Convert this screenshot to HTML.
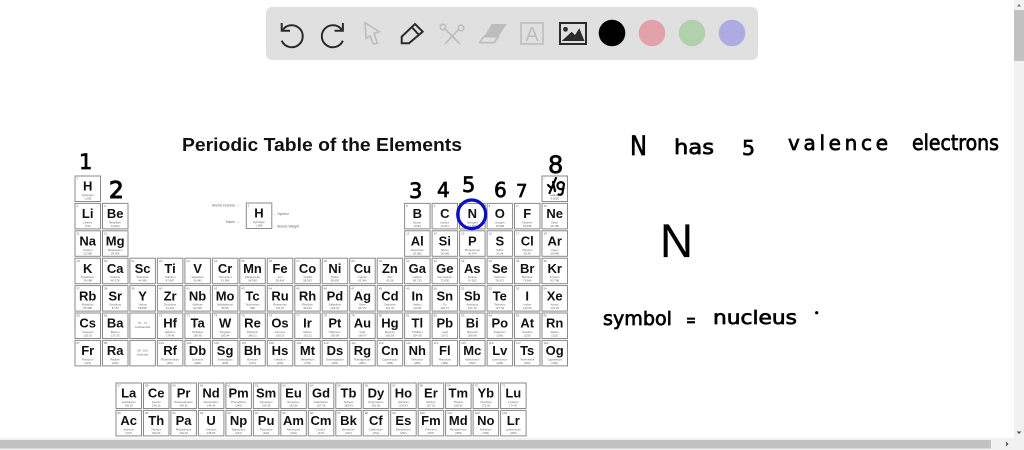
<!DOCTYPE html>
<html><head><meta charset="utf-8"><title>Periodic Table</title>
<style>
html,body{margin:0;padding:0;background:#fff;width:1024px;height:450px;overflow:hidden}
svg{display:block;font-family:"Liberation Sans",sans-serif}
.c rect{width:25.5px;height:25.5px;fill:#fff;stroke:#8a8a8a;stroke-width:1}
.s{font-size:13px;font-weight:700;text-anchor:middle;fill:#111}
.n{font-size:2.8px;text-anchor:middle;fill:#666}
.z{font-size:3px;fill:#666}
.l{font-size:3.4px;fill:#666}
.h{font-family:"DejaVu Sans",sans-serif;fill:#000;stroke:#000;stroke-width:.7}
</style></head><body>
<svg width="1024" height="450" viewBox="0 0 1024 450" xmlns="http://www.w3.org/2000/svg">
<!-- toolbar -->
<rect x="266" y="7" width="492" height="53" rx="6" fill="#e0e0e0"/>
<g fill="none" stroke="#2b2b2b" stroke-width="2">
<path d="M282.7 30A11 11 0 1 1 281.7 40.7"/><path d="M281.7 23V30.7H290"/>
<g transform="translate(624.6 0) scale(-1 1)"><path d="M282.7 30A11 11 0 1 1 281.7 40.7"/><path d="M281.7 23V30.7H290"/></g>
<path d="M401.7 43.3V36.7L415 24L422.7 31.7L409 43.3ZM411.7 27L419 35"/>
<rect x="560" y="23" width="26" height="21"/>
</g>
<g fill="none" stroke="#bdbdbd" stroke-width="1.6">
<path d="M365 22.7L379.3 31.7L374 33.3L377.3 43.3L373.3 44L370 36L366 38.3Z"/>
<path d="M444 28L460 44M459 29L445 44"/><circle cx="443" cy="27" r="2.8"/><circle cx="461" cy="28" r="2.8"/>
<path d="M480 41.7L484 36.7H498.3L494 42.7H480Z"/>
<rect x="521" y="23" width="22" height="21"/>
</g>
<path d="M491.7 24H506.7L498.3 36.7H484Z" fill="#bdbdbd"/>
<text x="532" y="41" font-size="20" text-anchor="middle" fill="#bdbdbd">A</text>
<circle cx="565.5" cy="29.3" r="2.4" fill="#2b2b2b"/>
<path d="M561.7 41L571.7 31.7L575 35L579.3 28.3L584.5 41Z" fill="#2b2b2b"/>
<circle cx="612" cy="33" r="13.3" fill="#000"/>
<circle cx="652" cy="33" r="13.3" fill="#e3a1aa"/>
<circle cx="692" cy="33" r="13.3" fill="#b1d1ad"/>
<circle cx="732" cy="33" r="13.3" fill="#aeaae2"/>
<!-- title -->
<text x="182" y="151" font-size="18" font-weight="700" fill="#111" textLength="280" lengthAdjust="spacingAndGlyphs">Periodic Table of the Elements</text>
<!-- legend -->
<g class="c" transform="translate(246.3 203)"><rect/><text class="z" x="1.5" y="3.7">1</text><text class="s" x="12.7" y="14.7">H</text><text class="n" x="12.7" y="20">Hydrogen</text><text class="n" x="12.7" y="23.5">1.008</text></g>
<text class="l" x="212" y="206.5">Atomic Number →</text>
<text class="l" x="226" y="223">Name →</text>
<text class="l" x="273" y="215">← Symbol</text>
<text class="l" x="273" y="227.5">← Atomic Weight</text>
<!-- row 1 -->
<g class="c" transform="translate(75 176)"><rect/><text class="z" x="1.5" y="3.7">1</text><text class="s" x="12.7" y="14.7">H</text><text class="n" x="12.7" y="20">Hydrogen</text><text class="n" x="12.7" y="23.5">1.008</text></g>
<g class="c" transform="translate(542 176)"><rect/><text class="z" x="1.5" y="3.7">2</text><text class="s" x="12.7" y="14.7">He</text><text class="n" x="12.7" y="20">Helium</text><text class="n" x="12.7" y="23.5">4.0026</text></g>
<!-- row 2 -->
<g class="c" transform="translate(75 203.4)"><rect/><text class="z" x="1.5" y="3.7">3</text><text class="s" x="12.7" y="14.7">Li</text><text class="n" x="12.7" y="20">Lithium</text><text class="n" x="12.7" y="23.5">6.94</text></g>
<g class="c" transform="translate(102.5 203.4)"><rect/><text class="z" x="1.5" y="3.7">4</text><text class="s" x="12.7" y="14.7">Be</text><text class="n" x="12.7" y="20">Beryllium</text><text class="n" x="12.7" y="23.5">9.0122</text></g>
<g class="c" transform="translate(404.6 203.4)"><rect/><text class="z" x="1.5" y="3.7">5</text><text class="s" x="12.7" y="14.7">B</text><text class="n" x="12.7" y="20">Boron</text><text class="n" x="12.7" y="23.5">10.81</text></g>
<g class="c" transform="translate(432.1 203.4)"><rect/><text class="z" x="1.5" y="3.7">6</text><text class="s" x="12.7" y="14.7">C</text><text class="n" x="12.7" y="20">Carbon</text><text class="n" x="12.7" y="23.5">12.011</text></g>
<g class="c" transform="translate(459.6 203.4)"><rect/><text class="z" x="1.5" y="3.7">7</text><text class="s" x="12.7" y="14.7">N</text><text class="n" x="12.7" y="20">Nitrogen</text><text class="n" x="12.7" y="23.5">14.007</text></g>
<g class="c" transform="translate(487.1 203.4)"><rect/><text class="z" x="1.5" y="3.7">8</text><text class="s" x="12.7" y="14.7">O</text><text class="n" x="12.7" y="20">Oxygen</text><text class="n" x="12.7" y="23.5">15.999</text></g>
<g class="c" transform="translate(514.5 203.4)"><rect/><text class="z" x="1.5" y="3.7">9</text><text class="s" x="12.7" y="14.7">F</text><text class="n" x="12.7" y="20">Fluorine</text><text class="n" x="12.7" y="23.5">18.998</text></g>
<g class="c" transform="translate(542 203.4)"><rect/><text class="z" x="1.5" y="3.7">10</text><text class="s" x="12.7" y="14.7">Ne</text><text class="n" x="12.7" y="20">Neon</text><text class="n" x="12.7" y="23.5">20.180</text></g>
<!-- row 3 -->
<g class="c" transform="translate(75 230.8)"><rect/><text class="z" x="1.5" y="3.7">11</text><text class="s" x="12.7" y="14.7">Na</text><text class="n" x="12.7" y="20">Sodium</text><text class="n" x="12.7" y="23.5">22.990</text></g>
<g class="c" transform="translate(102.5 230.8)"><rect/><text class="z" x="1.5" y="3.7">12</text><text class="s" x="12.7" y="14.7">Mg</text><text class="n" x="12.7" y="20">Magnesium</text><text class="n" x="12.7" y="23.5">24.305</text></g>
<g class="c" transform="translate(404.6 230.8)"><rect/><text class="z" x="1.5" y="3.7">13</text><text class="s" x="12.7" y="14.7">Al</text><text class="n" x="12.7" y="20">Aluminium</text><text class="n" x="12.7" y="23.5">26.982</text></g>
<g class="c" transform="translate(432.1 230.8)"><rect/><text class="z" x="1.5" y="3.7">14</text><text class="s" x="12.7" y="14.7">Si</text><text class="n" x="12.7" y="20">Silicon</text><text class="n" x="12.7" y="23.5">28.085</text></g>
<g class="c" transform="translate(459.6 230.8)"><rect/><text class="z" x="1.5" y="3.7">15</text><text class="s" x="12.7" y="14.7">P</text><text class="n" x="12.7" y="20">Phosphorus</text><text class="n" x="12.7" y="23.5">30.974</text></g>
<g class="c" transform="translate(487.1 230.8)"><rect/><text class="z" x="1.5" y="3.7">16</text><text class="s" x="12.7" y="14.7">S</text><text class="n" x="12.7" y="20">Sulfur</text><text class="n" x="12.7" y="23.5">32.06</text></g>
<g class="c" transform="translate(514.5 230.8)"><rect/><text class="z" x="1.5" y="3.7">17</text><text class="s" x="12.7" y="14.7">Cl</text><text class="n" x="12.7" y="20">Chlorine</text><text class="n" x="12.7" y="23.5">35.45</text></g>
<g class="c" transform="translate(542 230.8)"><rect/><text class="z" x="1.5" y="3.7">18</text><text class="s" x="12.7" y="14.7">Ar</text><text class="n" x="12.7" y="20">Argon</text><text class="n" x="12.7" y="23.5">39.948</text></g>
<!-- row 4 -->
<g class="c" transform="translate(75 258.2)"><rect/><text class="z" x="1.5" y="3.7">19</text><text class="s" x="12.7" y="14.7">K</text><text class="n" x="12.7" y="20">Potassium</text><text class="n" x="12.7" y="23.5">39.098</text></g>
<g class="c" transform="translate(102.5 258.2)"><rect/><text class="z" x="1.5" y="3.7">20</text><text class="s" x="12.7" y="14.7">Ca</text><text class="n" x="12.7" y="20">Calcium</text><text class="n" x="12.7" y="23.5">40.078</text></g>
<g class="c" transform="translate(129.9 258.2)"><rect/><text class="z" x="1.5" y="3.7">21</text><text class="s" x="12.7" y="14.7">Sc</text><text class="n" x="12.7" y="20">Scandium</text><text class="n" x="12.7" y="23.5">44.956</text></g>
<g class="c" transform="translate(157.4 258.2)"><rect/><text class="z" x="1.5" y="3.7">22</text><text class="s" x="12.7" y="14.7">Ti</text><text class="n" x="12.7" y="20">Titanium</text><text class="n" x="12.7" y="23.5">47.867</text></g>
<g class="c" transform="translate(184.9 258.2)"><rect/><text class="z" x="1.5" y="3.7">23</text><text class="s" x="12.7" y="14.7">V</text><text class="n" x="12.7" y="20">Vanadium</text><text class="n" x="12.7" y="23.5">50.942</text></g>
<g class="c" transform="translate(212.4 258.2)"><rect/><text class="z" x="1.5" y="3.7">24</text><text class="s" x="12.7" y="14.7">Cr</text><text class="n" x="12.7" y="20">Chromium</text><text class="n" x="12.7" y="23.5">51.996</text></g>
<g class="c" transform="translate(239.8 258.2)"><rect/><text class="z" x="1.5" y="3.7">25</text><text class="s" x="12.7" y="14.7">Mn</text><text class="n" x="12.7" y="20">Manganese</text><text class="n" x="12.7" y="23.5">54.938</text></g>
<g class="c" transform="translate(267.3 258.2)"><rect/><text class="z" x="1.5" y="3.7">26</text><text class="s" x="12.7" y="14.7">Fe</text><text class="n" x="12.7" y="20">Iron</text><text class="n" x="12.7" y="23.5">55.845</text></g>
<g class="c" transform="translate(294.8 258.2)"><rect/><text class="z" x="1.5" y="3.7">27</text><text class="s" x="12.7" y="14.7">Co</text><text class="n" x="12.7" y="20">Cobalt</text><text class="n" x="12.7" y="23.5">58.933</text></g>
<g class="c" transform="translate(322.2 258.2)"><rect/><text class="z" x="1.5" y="3.7">28</text><text class="s" x="12.7" y="14.7">Ni</text><text class="n" x="12.7" y="20">Nickel</text><text class="n" x="12.7" y="23.5">58.693</text></g>
<g class="c" transform="translate(349.7 258.2)"><rect/><text class="z" x="1.5" y="3.7">29</text><text class="s" x="12.7" y="14.7">Cu</text><text class="n" x="12.7" y="20">Copper</text><text class="n" x="12.7" y="23.5">63.546</text></g>
<g class="c" transform="translate(377.2 258.2)"><rect/><text class="z" x="1.5" y="3.7">30</text><text class="s" x="12.7" y="14.7">Zn</text><text class="n" x="12.7" y="20">Zinc</text><text class="n" x="12.7" y="23.5">65.38</text></g>
<g class="c" transform="translate(404.6 258.2)"><rect/><text class="z" x="1.5" y="3.7">31</text><text class="s" x="12.7" y="14.7">Ga</text><text class="n" x="12.7" y="20">Gallium</text><text class="n" x="12.7" y="23.5">69.723</text></g>
<g class="c" transform="translate(432.1 258.2)"><rect/><text class="z" x="1.5" y="3.7">32</text><text class="s" x="12.7" y="14.7">Ge</text><text class="n" x="12.7" y="20">Germanium</text><text class="n" x="12.7" y="23.5">72.630</text></g>
<g class="c" transform="translate(459.6 258.2)"><rect/><text class="z" x="1.5" y="3.7">33</text><text class="s" x="12.7" y="14.7">As</text><text class="n" x="12.7" y="20">Arsenic</text><text class="n" x="12.7" y="23.5">74.922</text></g>
<g class="c" transform="translate(487.1 258.2)"><rect/><text class="z" x="1.5" y="3.7">34</text><text class="s" x="12.7" y="14.7">Se</text><text class="n" x="12.7" y="20">Selenium</text><text class="n" x="12.7" y="23.5">78.971</text></g>
<g class="c" transform="translate(514.5 258.2)"><rect/><text class="z" x="1.5" y="3.7">35</text><text class="s" x="12.7" y="14.7">Br</text><text class="n" x="12.7" y="20">Bromine</text><text class="n" x="12.7" y="23.5">79.904</text></g>
<g class="c" transform="translate(542 258.2)"><rect/><text class="z" x="1.5" y="3.7">36</text><text class="s" x="12.7" y="14.7">Kr</text><text class="n" x="12.7" y="20">Krypton</text><text class="n" x="12.7" y="23.5">83.798</text></g>
<!-- row 5 -->
<g class="c" transform="translate(75 285.6)"><rect/><text class="z" x="1.5" y="3.7">37</text><text class="s" x="12.7" y="14.7">Rb</text><text class="n" x="12.7" y="20">Rubidium</text><text class="n" x="12.7" y="23.5">85.468</text></g>
<g class="c" transform="translate(102.5 285.6)"><rect/><text class="z" x="1.5" y="3.7">38</text><text class="s" x="12.7" y="14.7">Sr</text><text class="n" x="12.7" y="20">Strontium</text><text class="n" x="12.7" y="23.5">87.62</text></g>
<g class="c" transform="translate(129.9 285.6)"><rect/><text class="z" x="1.5" y="3.7">39</text><text class="s" x="12.7" y="14.7">Y</text><text class="n" x="12.7" y="20">Yttrium</text><text class="n" x="12.7" y="23.5">88.906</text></g>
<g class="c" transform="translate(157.4 285.6)"><rect/><text class="z" x="1.5" y="3.7">40</text><text class="s" x="12.7" y="14.7">Zr</text><text class="n" x="12.7" y="20">Zirconium</text><text class="n" x="12.7" y="23.5">91.224</text></g>
<g class="c" transform="translate(184.9 285.6)"><rect/><text class="z" x="1.5" y="3.7">41</text><text class="s" x="12.7" y="14.7">Nb</text><text class="n" x="12.7" y="20">Niobium</text><text class="n" x="12.7" y="23.5">92.906</text></g>
<g class="c" transform="translate(212.4 285.6)"><rect/><text class="z" x="1.5" y="3.7">42</text><text class="s" x="12.7" y="14.7">Mo</text><text class="n" x="12.7" y="20">Molybdenum</text><text class="n" x="12.7" y="23.5">95.95</text></g>
<g class="c" transform="translate(239.8 285.6)"><rect/><text class="z" x="1.5" y="3.7">43</text><text class="s" x="12.7" y="14.7">Tc</text><text class="n" x="12.7" y="20">Technetium</text><text class="n" x="12.7" y="23.5">(98)</text></g>
<g class="c" transform="translate(267.3 285.6)"><rect/><text class="z" x="1.5" y="3.7">44</text><text class="s" x="12.7" y="14.7">Ru</text><text class="n" x="12.7" y="20">Ruthenium</text><text class="n" x="12.7" y="23.5">101.07</text></g>
<g class="c" transform="translate(294.8 285.6)"><rect/><text class="z" x="1.5" y="3.7">45</text><text class="s" x="12.7" y="14.7">Rh</text><text class="n" x="12.7" y="20">Rhodium</text><text class="n" x="12.7" y="23.5">102.91</text></g>
<g class="c" transform="translate(322.2 285.6)"><rect/><text class="z" x="1.5" y="3.7">46</text><text class="s" x="12.7" y="14.7">Pd</text><text class="n" x="12.7" y="20">Palladium</text><text class="n" x="12.7" y="23.5">106.42</text></g>
<g class="c" transform="translate(349.7 285.6)"><rect/><text class="z" x="1.5" y="3.7">47</text><text class="s" x="12.7" y="14.7">Ag</text><text class="n" x="12.7" y="20">Silver</text><text class="n" x="12.7" y="23.5">107.87</text></g>
<g class="c" transform="translate(377.2 285.6)"><rect/><text class="z" x="1.5" y="3.7">48</text><text class="s" x="12.7" y="14.7">Cd</text><text class="n" x="12.7" y="20">Cadmium</text><text class="n" x="12.7" y="23.5">112.41</text></g>
<g class="c" transform="translate(404.6 285.6)"><rect/><text class="z" x="1.5" y="3.7">49</text><text class="s" x="12.7" y="14.7">In</text><text class="n" x="12.7" y="20">Indium</text><text class="n" x="12.7" y="23.5">114.82</text></g>
<g class="c" transform="translate(432.1 285.6)"><rect/><text class="z" x="1.5" y="3.7">50</text><text class="s" x="12.7" y="14.7">Sn</text><text class="n" x="12.7" y="20">Tin</text><text class="n" x="12.7" y="23.5">118.71</text></g>
<g class="c" transform="translate(459.6 285.6)"><rect/><text class="z" x="1.5" y="3.7">51</text><text class="s" x="12.7" y="14.7">Sb</text><text class="n" x="12.7" y="20">Antimony</text><text class="n" x="12.7" y="23.5">121.76</text></g>
<g class="c" transform="translate(487.1 285.6)"><rect/><text class="z" x="1.5" y="3.7">52</text><text class="s" x="12.7" y="14.7">Te</text><text class="n" x="12.7" y="20">Tellurium</text><text class="n" x="12.7" y="23.5">127.60</text></g>
<g class="c" transform="translate(514.5 285.6)"><rect/><text class="z" x="1.5" y="3.7">53</text><text class="s" x="12.7" y="14.7">I</text><text class="n" x="12.7" y="20">Iodine</text><text class="n" x="12.7" y="23.5">126.90</text></g>
<g class="c" transform="translate(542 285.6)"><rect/><text class="z" x="1.5" y="3.7">54</text><text class="s" x="12.7" y="14.7">Xe</text><text class="n" x="12.7" y="20">Xenon</text><text class="n" x="12.7" y="23.5">131.29</text></g>
<!-- row 6 -->
<g class="c" transform="translate(75 313)"><rect/><text class="z" x="1.5" y="3.7">55</text><text class="s" x="12.7" y="14.7">Cs</text><text class="n" x="12.7" y="20">Caesium</text><text class="n" x="12.7" y="23.5">132.91</text></g>
<g class="c" transform="translate(102.5 313)"><rect/><text class="z" x="1.5" y="3.7">56</text><text class="s" x="12.7" y="14.7">Ba</text><text class="n" x="12.7" y="20">Barium</text><text class="n" x="12.7" y="23.5">137.33</text></g>
<g class="c" transform="translate(129.9 313)"><rect/><text class="n" x="12.7" y="11">57 - 71</text><text class="n" x="12.7" y="15">Lanthanoids</text></g>
<g class="c" transform="translate(157.4 313)"><rect/><text class="z" x="1.5" y="3.7">72</text><text class="s" x="12.7" y="14.7">Hf</text><text class="n" x="12.7" y="20">Hafnium</text><text class="n" x="12.7" y="23.5">178.49</text></g>
<g class="c" transform="translate(184.9 313)"><rect/><text class="z" x="1.5" y="3.7">73</text><text class="s" x="12.7" y="14.7">Ta</text><text class="n" x="12.7" y="20">Tantalum</text><text class="n" x="12.7" y="23.5">180.95</text></g>
<g class="c" transform="translate(212.4 313)"><rect/><text class="z" x="1.5" y="3.7">74</text><text class="s" x="12.7" y="14.7">W</text><text class="n" x="12.7" y="20">Tungsten</text><text class="n" x="12.7" y="23.5">183.84</text></g>
<g class="c" transform="translate(239.8 313)"><rect/><text class="z" x="1.5" y="3.7">75</text><text class="s" x="12.7" y="14.7">Re</text><text class="n" x="12.7" y="20">Rhenium</text><text class="n" x="12.7" y="23.5">186.21</text></g>
<g class="c" transform="translate(267.3 313)"><rect/><text class="z" x="1.5" y="3.7">76</text><text class="s" x="12.7" y="14.7">Os</text><text class="n" x="12.7" y="20">Osmium</text><text class="n" x="12.7" y="23.5">190.23</text></g>
<g class="c" transform="translate(294.8 313)"><rect/><text class="z" x="1.5" y="3.7">77</text><text class="s" x="12.7" y="14.7">Ir</text><text class="n" x="12.7" y="20">Iridium</text><text class="n" x="12.7" y="23.5">192.22</text></g>
<g class="c" transform="translate(322.2 313)"><rect/><text class="z" x="1.5" y="3.7">78</text><text class="s" x="12.7" y="14.7">Pt</text><text class="n" x="12.7" y="20">Platinum</text><text class="n" x="12.7" y="23.5">195.08</text></g>
<g class="c" transform="translate(349.7 313)"><rect/><text class="z" x="1.5" y="3.7">79</text><text class="s" x="12.7" y="14.7">Au</text><text class="n" x="12.7" y="20">Gold</text><text class="n" x="12.7" y="23.5">196.97</text></g>
<g class="c" transform="translate(377.2 313)"><rect/><text class="z" x="1.5" y="3.7">80</text><text class="s" x="12.7" y="14.7">Hg</text><text class="n" x="12.7" y="20">Mercury</text><text class="n" x="12.7" y="23.5">200.59</text></g>
<g class="c" transform="translate(404.6 313)"><rect/><text class="z" x="1.5" y="3.7">81</text><text class="s" x="12.7" y="14.7">Tl</text><text class="n" x="12.7" y="20">Thallium</text><text class="n" x="12.7" y="23.5">204.38</text></g>
<g class="c" transform="translate(432.1 313)"><rect/><text class="z" x="1.5" y="3.7">82</text><text class="s" x="12.7" y="14.7">Pb</text><text class="n" x="12.7" y="20">Lead</text><text class="n" x="12.7" y="23.5">207.2</text></g>
<g class="c" transform="translate(459.6 313)"><rect/><text class="z" x="1.5" y="3.7">83</text><text class="s" x="12.7" y="14.7">Bi</text><text class="n" x="12.7" y="20">Bismuth</text><text class="n" x="12.7" y="23.5">208.98</text></g>
<g class="c" transform="translate(487.1 313)"><rect/><text class="z" x="1.5" y="3.7">84</text><text class="s" x="12.7" y="14.7">Po</text><text class="n" x="12.7" y="20">Polonium</text><text class="n" x="12.7" y="23.5">(209)</text></g>
<g class="c" transform="translate(514.5 313)"><rect/><text class="z" x="1.5" y="3.7">85</text><text class="s" x="12.7" y="14.7">At</text><text class="n" x="12.7" y="20">Astatine</text><text class="n" x="12.7" y="23.5">(210)</text></g>
<g class="c" transform="translate(542 313)"><rect/><text class="z" x="1.5" y="3.7">86</text><text class="s" x="12.7" y="14.7">Rn</text><text class="n" x="12.7" y="20">Radon</text><text class="n" x="12.7" y="23.5">(222)</text></g>
<!-- row 7 -->
<g class="c" transform="translate(75 340.4)"><rect/><text class="z" x="1.5" y="3.7">87</text><text class="s" x="12.7" y="14.7">Fr</text><text class="n" x="12.7" y="20">Francium</text><text class="n" x="12.7" y="23.5">(223)</text></g>
<g class="c" transform="translate(102.5 340.4)"><rect/><text class="z" x="1.5" y="3.7">88</text><text class="s" x="12.7" y="14.7">Ra</text><text class="n" x="12.7" y="20">Radium</text><text class="n" x="12.7" y="23.5">(226)</text></g>
<g class="c" transform="translate(129.9 340.4)"><rect/><text class="n" x="12.7" y="11">89 - 103</text><text class="n" x="12.7" y="15">Actinoids</text></g>
<g class="c" transform="translate(157.4 340.4)"><rect/><text class="z" x="1.5" y="3.7">104</text><text class="s" x="12.7" y="14.7">Rf</text><text class="n" x="12.7" y="20">Rutherfordium</text><text class="n" x="12.7" y="23.5">(267)</text></g>
<g class="c" transform="translate(184.9 340.4)"><rect/><text class="z" x="1.5" y="3.7">105</text><text class="s" x="12.7" y="14.7">Db</text><text class="n" x="12.7" y="20">Dubnium</text><text class="n" x="12.7" y="23.5">(268)</text></g>
<g class="c" transform="translate(212.4 340.4)"><rect/><text class="z" x="1.5" y="3.7">106</text><text class="s" x="12.7" y="14.7">Sg</text><text class="n" x="12.7" y="20">Seaborgium</text><text class="n" x="12.7" y="23.5">(269)</text></g>
<g class="c" transform="translate(239.8 340.4)"><rect/><text class="z" x="1.5" y="3.7">107</text><text class="s" x="12.7" y="14.7">Bh</text><text class="n" x="12.7" y="20">Bohrium</text><text class="n" x="12.7" y="23.5">(270)</text></g>
<g class="c" transform="translate(267.3 340.4)"><rect/><text class="z" x="1.5" y="3.7">108</text><text class="s" x="12.7" y="14.7">Hs</text><text class="n" x="12.7" y="20">Hassium</text><text class="n" x="12.7" y="23.5">(269)</text></g>
<g class="c" transform="translate(294.8 340.4)"><rect/><text class="z" x="1.5" y="3.7">109</text><text class="s" x="12.7" y="14.7">Mt</text><text class="n" x="12.7" y="20">Meitnerium</text><text class="n" x="12.7" y="23.5">(278)</text></g>
<g class="c" transform="translate(322.2 340.4)"><rect/><text class="z" x="1.5" y="3.7">110</text><text class="s" x="12.7" y="14.7">Ds</text><text class="n" x="12.7" y="20">Darmstadtium</text><text class="n" x="12.7" y="23.5">(281)</text></g>
<g class="c" transform="translate(349.7 340.4)"><rect/><text class="z" x="1.5" y="3.7">111</text><text class="s" x="12.7" y="14.7">Rg</text><text class="n" x="12.7" y="20">Roentgenium</text><text class="n" x="12.7" y="23.5">(282)</text></g>
<g class="c" transform="translate(377.2 340.4)"><rect/><text class="z" x="1.5" y="3.7">112</text><text class="s" x="12.7" y="14.7">Cn</text><text class="n" x="12.7" y="20">Copernicium</text><text class="n" x="12.7" y="23.5">(285)</text></g>
<g class="c" transform="translate(404.6 340.4)"><rect/><text class="z" x="1.5" y="3.7">113</text><text class="s" x="12.7" y="14.7">Nh</text><text class="n" x="12.7" y="20">Nihonium</text><text class="n" x="12.7" y="23.5">(286)</text></g>
<g class="c" transform="translate(432.1 340.4)"><rect/><text class="z" x="1.5" y="3.7">114</text><text class="s" x="12.7" y="14.7">Fl</text><text class="n" x="12.7" y="20">Flerovium</text><text class="n" x="12.7" y="23.5">(289)</text></g>
<g class="c" transform="translate(459.6 340.4)"><rect/><text class="z" x="1.5" y="3.7">115</text><text class="s" x="12.7" y="14.7">Mc</text><text class="n" x="12.7" y="20">Moscovium</text><text class="n" x="12.7" y="23.5">(290)</text></g>
<g class="c" transform="translate(487.1 340.4)"><rect/><text class="z" x="1.5" y="3.7">116</text><text class="s" x="12.7" y="14.7">Lv</text><text class="n" x="12.7" y="20">Livermorium</text><text class="n" x="12.7" y="23.5">(293)</text></g>
<g class="c" transform="translate(514.5 340.4)"><rect/><text class="z" x="1.5" y="3.7">117</text><text class="s" x="12.7" y="14.7">Ts</text><text class="n" x="12.7" y="20">Tennessine</text><text class="n" x="12.7" y="23.5">(294)</text></g>
<g class="c" transform="translate(542 340.4)"><rect/><text class="z" x="1.5" y="3.7">118</text><text class="s" x="12.7" y="14.7">Og</text><text class="n" x="12.7" y="20">Oganesson</text><text class="n" x="12.7" y="23.5">(294)</text></g>
<!-- lanthanoids -->
<g class="c" transform="translate(116 383)"><rect/><text class="z" x="1.5" y="3.7">57</text><text class="s" x="12.7" y="14.7">La</text><text class="n" x="12.7" y="20">Lanthanum</text><text class="n" x="12.7" y="23.5">138.91</text></g>
<g class="c" transform="translate(143.5 383)"><rect/><text class="z" x="1.5" y="3.7">58</text><text class="s" x="12.7" y="14.7">Ce</text><text class="n" x="12.7" y="20">Cerium</text><text class="n" x="12.7" y="23.5">140.12</text></g>
<g class="c" transform="translate(170.9 383)"><rect/><text class="z" x="1.5" y="3.7">59</text><text class="s" x="12.7" y="14.7">Pr</text><text class="n" x="12.7" y="20">Praseodymium</text><text class="n" x="12.7" y="23.5">140.91</text></g>
<g class="c" transform="translate(198.4 383)"><rect/><text class="z" x="1.5" y="3.7">60</text><text class="s" x="12.7" y="14.7">Nd</text><text class="n" x="12.7" y="20">Neodymium</text><text class="n" x="12.7" y="23.5">144.24</text></g>
<g class="c" transform="translate(225.9 383)"><rect/><text class="z" x="1.5" y="3.7">61</text><text class="s" x="12.7" y="14.7">Pm</text><text class="n" x="12.7" y="20">Promethium</text><text class="n" x="12.7" y="23.5">(145)</text></g>
<g class="c" transform="translate(253.4 383)"><rect/><text class="z" x="1.5" y="3.7">62</text><text class="s" x="12.7" y="14.7">Sm</text><text class="n" x="12.7" y="20">Samarium</text><text class="n" x="12.7" y="23.5">150.36</text></g>
<g class="c" transform="translate(280.8 383)"><rect/><text class="z" x="1.5" y="3.7">63</text><text class="s" x="12.7" y="14.7">Eu</text><text class="n" x="12.7" y="20">Europium</text><text class="n" x="12.7" y="23.5">151.96</text></g>
<g class="c" transform="translate(308.3 383)"><rect/><text class="z" x="1.5" y="3.7">64</text><text class="s" x="12.7" y="14.7">Gd</text><text class="n" x="12.7" y="20">Gadolinium</text><text class="n" x="12.7" y="23.5">157.25</text></g>
<g class="c" transform="translate(335.8 383)"><rect/><text class="z" x="1.5" y="3.7">65</text><text class="s" x="12.7" y="14.7">Tb</text><text class="n" x="12.7" y="20">Terbium</text><text class="n" x="12.7" y="23.5">158.93</text></g>
<g class="c" transform="translate(363.2 383)"><rect/><text class="z" x="1.5" y="3.7">66</text><text class="s" x="12.7" y="14.7">Dy</text><text class="n" x="12.7" y="20">Dysprosium</text><text class="n" x="12.7" y="23.5">162.50</text></g>
<g class="c" transform="translate(390.7 383)"><rect/><text class="z" x="1.5" y="3.7">67</text><text class="s" x="12.7" y="14.7">Ho</text><text class="n" x="12.7" y="20">Holmium</text><text class="n" x="12.7" y="23.5">164.93</text></g>
<g class="c" transform="translate(418.2 383)"><rect/><text class="z" x="1.5" y="3.7">68</text><text class="s" x="12.7" y="14.7">Er</text><text class="n" x="12.7" y="20">Erbium</text><text class="n" x="12.7" y="23.5">167.26</text></g>
<g class="c" transform="translate(445.6 383)"><rect/><text class="z" x="1.5" y="3.7">69</text><text class="s" x="12.7" y="14.7">Tm</text><text class="n" x="12.7" y="20">Thulium</text><text class="n" x="12.7" y="23.5">168.93</text></g>
<g class="c" transform="translate(473.1 383)"><rect/><text class="z" x="1.5" y="3.7">70</text><text class="s" x="12.7" y="14.7">Yb</text><text class="n" x="12.7" y="20">Ytterbium</text><text class="n" x="12.7" y="23.5">173.05</text></g>
<g class="c" transform="translate(500.6 383)"><rect/><text class="z" x="1.5" y="3.7">71</text><text class="s" x="12.7" y="14.7">Lu</text><text class="n" x="12.7" y="20">Lutetium</text><text class="n" x="12.7" y="23.5">174.97</text></g>
<!-- actinoids -->
<g class="c" transform="translate(116 410.4)"><rect/><text class="z" x="1.5" y="3.7">89</text><text class="s" x="12.7" y="14.7">Ac</text><text class="n" x="12.7" y="20">Actinium</text><text class="n" x="12.7" y="23.5">(227)</text></g>
<g class="c" transform="translate(143.5 410.4)"><rect/><text class="z" x="1.5" y="3.7">90</text><text class="s" x="12.7" y="14.7">Th</text><text class="n" x="12.7" y="20">Thorium</text><text class="n" x="12.7" y="23.5">232.04</text></g>
<g class="c" transform="translate(170.9 410.4)"><rect/><text class="z" x="1.5" y="3.7">91</text><text class="s" x="12.7" y="14.7">Pa</text><text class="n" x="12.7" y="20">Protactinium</text><text class="n" x="12.7" y="23.5">231.04</text></g>
<g class="c" transform="translate(198.4 410.4)"><rect/><text class="z" x="1.5" y="3.7">92</text><text class="s" x="12.7" y="14.7">U</text><text class="n" x="12.7" y="20">Uranium</text><text class="n" x="12.7" y="23.5">238.03</text></g>
<g class="c" transform="translate(225.9 410.4)"><rect/><text class="z" x="1.5" y="3.7">93</text><text class="s" x="12.7" y="14.7">Np</text><text class="n" x="12.7" y="20">Neptunium</text><text class="n" x="12.7" y="23.5">(237)</text></g>
<g class="c" transform="translate(253.4 410.4)"><rect/><text class="z" x="1.5" y="3.7">94</text><text class="s" x="12.7" y="14.7">Pu</text><text class="n" x="12.7" y="20">Plutonium</text><text class="n" x="12.7" y="23.5">(244)</text></g>
<g class="c" transform="translate(280.8 410.4)"><rect/><text class="z" x="1.5" y="3.7">95</text><text class="s" x="12.7" y="14.7">Am</text><text class="n" x="12.7" y="20">Americium</text><text class="n" x="12.7" y="23.5">(243)</text></g>
<g class="c" transform="translate(308.3 410.4)"><rect/><text class="z" x="1.5" y="3.7">96</text><text class="s" x="12.7" y="14.7">Cm</text><text class="n" x="12.7" y="20">Curium</text><text class="n" x="12.7" y="23.5">(247)</text></g>
<g class="c" transform="translate(335.8 410.4)"><rect/><text class="z" x="1.5" y="3.7">97</text><text class="s" x="12.7" y="14.7">Bk</text><text class="n" x="12.7" y="20">Berkelium</text><text class="n" x="12.7" y="23.5">(247)</text></g>
<g class="c" transform="translate(363.2 410.4)"><rect/><text class="z" x="1.5" y="3.7">98</text><text class="s" x="12.7" y="14.7">Cf</text><text class="n" x="12.7" y="20">Californium</text><text class="n" x="12.7" y="23.5">(251)</text></g>
<g class="c" transform="translate(390.7 410.4)"><rect/><text class="z" x="1.5" y="3.7">99</text><text class="s" x="12.7" y="14.7">Es</text><text class="n" x="12.7" y="20">Einsteinium</text><text class="n" x="12.7" y="23.5">(252)</text></g>
<g class="c" transform="translate(418.2 410.4)"><rect/><text class="z" x="1.5" y="3.7">100</text><text class="s" x="12.7" y="14.7">Fm</text><text class="n" x="12.7" y="20">Fermium</text><text class="n" x="12.7" y="23.5">(257)</text></g>
<g class="c" transform="translate(445.6 410.4)"><rect/><text class="z" x="1.5" y="3.7">101</text><text class="s" x="12.7" y="14.7">Md</text><text class="n" x="12.7" y="20">Mendelevium</text><text class="n" x="12.7" y="23.5">(258)</text></g>
<g class="c" transform="translate(473.1 410.4)"><rect/><text class="z" x="1.5" y="3.7">102</text><text class="s" x="12.7" y="14.7">No</text><text class="n" x="12.7" y="20">Nobelium</text><text class="n" x="12.7" y="23.5">(259)</text></g>
<g class="c" transform="translate(500.6 410.4)"><rect/><text class="z" x="1.5" y="3.7">103</text><text class="s" x="12.7" y="14.7">Lr</text><text class="n" x="12.7" y="20">Lawrencium</text><text class="n" x="12.7" y="23.5">(266)</text></g>
<!-- scribble over He and blue circle -->
<rect x="544" y="178" width="21" height="15" fill="#fff"/>
<path d="M548 185l2 2M549.5 193L556 178M553 182l2 9" fill="none" stroke="#000" stroke-width="2.2" stroke-linecap="round"/>
<path d="M564 184a3.5 3.5 0 1 0-.5 4M564 184l-1.500 9q-1 2.500-4 1.500" fill="none" stroke="#000" stroke-width="2.2" stroke-linecap="round"/>
<ellipse cx="471.7" cy="214.300" rx="14" ry="14.300" fill="none" stroke="#0d0dc4" stroke-width="3.200"/>
<!-- handwritten notes -->
<g class="h">
<text x="79" y="169" font-size="21">1</text>
<text x="109" y="198" font-size="23" stroke-width="1.100">2</text>
<text x="409" y="198" font-size="21">3</text>
<text x="437" y="197" font-size="20">4</text>
<text x="462" y="192" font-size="21">5</text>
<text x="494" y="197" font-size="20">6</text>
<text x="516" y="197" font-size="18">7</text>
<text x="548" y="173" font-size="24">8</text>
<text x="630" y="155" font-size="27" textLength="17" lengthAdjust="spacingAndGlyphs">N</text>
<text x="674" y="154" font-size="20" textLength="40" lengthAdjust="spacingAndGlyphs">has</text>
<text x="742" y="155" font-size="20" textLength="13" lengthAdjust="spacingAndGlyphs">5</text>
<text x="788" y="150" font-size="20" textLength="100">valence</text>
<text x="912" y="150" font-size="21" textLength="87" lengthAdjust="spacingAndGlyphs">electrons</text>
<text x="660" y="257" font-size="47" textLength="33" lengthAdjust="spacingAndGlyphs" stroke-width=".2" style="font-family:'Liberation Sans',sans-serif">N</text>
<text x="603" y="325" font-size="19" textLength="69" lengthAdjust="spacingAndGlyphs">symbol</text>
<text x="686" y="326" font-size="18" textLength="10" lengthAdjust="spacingAndGlyphs">=</text>
<text x="713" y="324" font-size="19" textLength="84" lengthAdjust="spacingAndGlyphs">nucleus</text>
</g>
<circle cx="816.700" cy="312.700" r="1.600" fill="#000"/>
<!-- scrollbars -->
<rect x="1014" y="0" width="10" height="450" fill="#f1f1f1"/>
<rect x="1014" y="10" width="10" height="51" fill="#c1c1c1"/>
<path d="M1017 6.500h4l-2-2.500Z" fill="#777"/>
<path d="M1016.500 431.500h5l-2.500 2.500Z" fill="#555"/>
<rect x="0" y="438" width="1024" height="12" fill="#f1f1f1"/>
<rect x="0" y="440" width="991" height="8.500" fill="#c1c1c1"/>
<path d="M1006 441.500v5l2.500-2.500Z" fill="#555"/>
</svg>
</body></html>
